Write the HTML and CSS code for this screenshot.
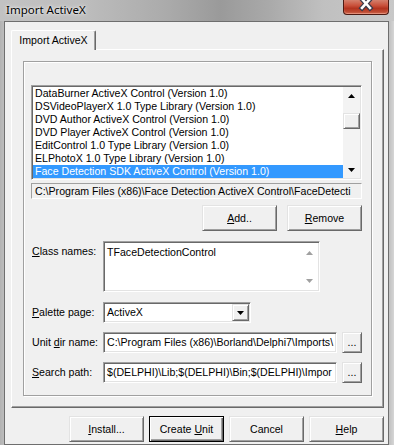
FILE: index.html
```html
<!DOCTYPE html>
<html>
<head>
<meta charset="utf-8">
<link rel="stylesheet" href="styles.css">
</head>
<body>
<div class="window">
  <div class="titlebar">
    <span class="title">Import ActiveX</span>
    <div class="close">
      <svg width="20" height="12" viewBox="0 0 20 12">
        <path d="M6 -1 L14 8 M14 -1 L6 8" stroke="#3a3a4a" stroke-width="5" stroke-linecap="square" fill="none"/>
        <path d="M6 -1 L14 8 M14 -1 L6 8" stroke="#ffffff" stroke-width="2.6" stroke-linecap="square" fill="none"/>
      </svg>
    </div>
  </div>
  <div class="client">
    <div class="tabs"><div class="tab">Import ActiveX</div></div>
    <div class="page">
      <div class="group">
        <div class="listbox sunken">
          <div class="items">
            <div class="item">DataBurner ActiveX Control (Version 1.0)</div>
            <div class="item">DSVideoPlayerX 1.0 Type Library (Version 1.0)</div>
            <div class="item">DVD Author ActiveX Control (Version 1.0)</div>
            <div class="item">DVD Player ActiveX Control (Version 1.0)</div>
            <div class="item">EditControl 1.0 Type Library (Version 1.0)</div>
            <div class="item">ELPhotoX 1.0 Type Library (Version 1.0)</div>
            <div class="item sel">Face Detection SDK ActiveX Control (Version 1.0)</div>
          </div>
          <div class="vscroll">
            <div class="sb-arrow"><svg width="7" height="4" viewBox="0 0 7 4"><polygon points="3.5,0 7,4 0,4" fill="#000"/></svg></div>
            <div class="sb-track"><div class="thumb"></div></div>
            <div class="sb-arrow"><svg width="7" height="4" viewBox="0 0 7 4"><polygon points="0,0 7,0 3.5,4" fill="#000"/></svg></div>
          </div>
        </div>
        <div class="pathfield">C:\Program Files (x86)\Face Detection ActiveX Control\FaceDetecti</div>
        <div class="btnrow">
          <button class="btn w75"><u>A</u>dd..</button>
          <button class="btn w75"><u>R</u>emove</button>
        </div>
        <div class="memo-row">
          <div class="label top"><u>C</u>lass names:</div>
          <div class="memo sunken">
            <div class="memo-text">TFaceDetectionControl</div>
            <div class="memo-scroll">
              <svg width="7" height="4" viewBox="0 0 7 4"><polygon points="3.5,0 7,4 0,4" fill="#a0a0a0"/></svg>
              <svg width="7" height="4" viewBox="0 0 7 4"><polygon points="0,0 7,0 3.5,4" fill="#a0a0a0"/></svg>
            </div>
          </div>
        </div>
        <div class="field-row first">
          <div class="label"><u>P</u>alette page:</div>
          <div class="combo sunken">
            <div class="combo-text">ActiveX</div>
            <div class="combo-btn"><svg width="7" height="4" viewBox="0 0 7 4"><polygon points="0,0 7,0 3.5,4" fill="#000"/></svg></div>
          </div>
        </div>
        <div class="field-row">
          <div class="label">Unit <u>d</u>ir name:</div>
          <div class="edit sunken">C:\Program Files (x86)\Borland\Delphi7\Imports\</div>
          <button class="btn dots">...</button>
        </div>
        <div class="field-row">
          <div class="label"><u>S</u>earch path:</div>
          <div class="edit sunken">$(DELPHI)\Lib;$(DELPHI)\Bin;$(DELPHI)\Impor</div>
          <button class="btn dots">...</button>
        </div>
      </div>
    </div>
    <div class="footer">
      <button class="btn w75 tall"><u>I</u>nstall...</button>
      <button class="btn w75 tall default">Create <u>U</u>nit</button>
      <button class="btn w75 tall">Cancel</button>
      <button class="btn w75 tall"><u>H</u>elp</button>
    </div>
  </div>
</div>
</body>
</html>
```

FILE: styles.css
```css
* { box-sizing: border-box; }
html, body { margin: 0; padding: 0; }
body {
  width: 394px;
  height: 445px;
  overflow: hidden;
  font-family: "Liberation Sans", Arial, sans-serif;
  font-size: 10.6px;
  color: #000;
  background: #b4b4b4;
}
u { text-decoration: underline; text-underline-offset: 1px; }

.window {
  width: 394px;
  height: 445px;
  display: flex;
  flex-direction: column;
  background: linear-gradient(90deg, #b2b2b2 0px, #bcbcbc 4px, #c4c4c4 390px, #d6d6d6 394px);
}

.titlebar {
  height: 21px;
  flex: none;
  display: flex;
  justify-content: space-between;
  align-items: flex-start;
  background: linear-gradient(90deg, #c2c2c2 0%, #bebebe 20%, #ababab 42%, #9a9a9a 56%, #a9a9a9 68%, #c0c0c0 82%, #c8c8c8 100%);
}
.title {
  font-family: "Noto Sans", "Open Sans", sans-serif;
  font-size: 11.5px;
  line-height: 20px;
  padding-left: 6px;
  color: #000;
  text-shadow: 0 0 4px rgba(255,255,255,0.9), 0 0 2px rgba(255,255,255,0.7);
}
.close {
  width: 46px;
  height: 15px;
  margin-right: 5px;
  border: 1px solid #4d1a12;
  border-top: none;
  border-radius: 0 0 4px 4px;
  background: linear-gradient(180deg, #d4806c 0%, #c9503a 40%, #b3341f 60%, #c65a40 100%);
  box-shadow: inset 0 -1px 1px rgba(255,190,170,0.6);
  display: flex;
  justify-content: center;
}

.client {
  margin-left: 4px;
  width: 385px;
  height: 424px;
  border: 1px solid #6e6e6e;
  background: #f0f0f0;
}

.tabs {
  display: flex;
  height: 28px;
  margin-bottom: -1px;
  padding: 8px 0 0 6px;
}
.tab {
  position: relative;
  z-index: 1;
  width: 85px;
  height: 20px;
  background: #f0f0f0;
  border-top: 1px solid #fff;
  border-left: 1px solid #fff;
  border-right: 1px solid #696969;
  border-radius: 2px 2px 0 0;
  box-shadow: inset -1px 0 0 #a0a0a0;
  text-align: center;
  line-height: 18px;
}

.page {
  margin-left: 6px;
  width: 373px;
  height: 359px;
  border-top: 1px solid #fff;
  border-left: 1px solid #fff;
  border-right: 1px solid #696969;
  border-bottom: 1px solid #696969;
  box-shadow: inset -1px -1px 0 #a0a0a0;
  padding: 11px 0 0 11px;
}

.group {
  width: 349px;
  height: 335px;
  border: 1px solid #a0a0a0;
  box-shadow: 1px 1px 0 #fff, inset 1px 1px 0 #fff;
  padding: 23px 9px 0 7px;
}

.sunken {
  border: 1px solid;
  border-color: #a0a0a0 #fff #fff #a0a0a0;
  box-shadow: inset 1px 1px 0 #696969, inset -1px -1px 0 #e3e3e3;
  background: #fff;
  padding: 1px;
}

.listbox {
  display: flex;
  width: 331px;
  height: 95px;
}
.items {
  flex: 1;
  overflow: hidden;
}
.item {
  height: 13px;
  line-height: 13px;
  padding-left: 2px;
  white-space: nowrap;
}
.item.sel {
  background: #3399ff;
  color: #fff;
}
.vscroll {
  width: 17px;
  display: flex;
  flex-direction: column;
  background: #f3f3f3;
}
.sb-arrow {
  height: 17px;
  display: flex;
  align-items: center;
  justify-content: center;
}
.sb-track {
  flex: 1;
  padding-top: 9px;
}
.thumb {
  height: 16px;
  background: #f0f0f0;
  border: 1px solid;
  border-color: #e3e3e3 #696969 #696969 #e3e3e3;
  box-shadow: inset 1px 1px 0 #fff, inset -1px -1px 0 #a0a0a0;
}

.pathfield {
  margin-top: 3px;
  width: 331px;
  height: 16px;
  border: 1px solid;
  border-color: #a0a0a0 #fff #fff #a0a0a0;
  background: #f0f0f0;
  padding-left: 3px;
  line-height: 14px;
  white-space: nowrap;
  overflow: hidden;
}

.btnrow {
  margin-top: 6px;
  width: 331px;
  display: flex;
  justify-content: flex-end;
  gap: 10px;
}

.btn {
  font: inherit;
  color: #000;
  background: #f0f0f0;
  border: 1px solid;
  border-color: #e3e3e3 #696969 #696969 #e3e3e3;
  box-shadow: inset 1px 1px 0 #fff, inset -1px -1px 0 #a0a0a0;
  padding: 0;
  margin: 0;
  height: 26px;
  text-align: center;
  white-space: nowrap;
}
.w75 { width: 75px; }
.btn.default {
  border: 1px solid #000;
  box-shadow: inset 1px 1px 0 #fff, inset -1px -1px 0 #696969, inset -2px -2px 0 #a0a0a0;
}
.btn.dots {
  width: 20px;
  height: 21px;
  line-height: 15px;
  flex: none;
}

.memo-row {
  margin-top: 10px;
  display: flex;
  width: 331px;
}
.label {
  width: 72px;
  flex: none;
  padding-left: 1px;
  line-height: 21px;
  white-space: nowrap;
}
.label.top {
  line-height: 13px;
  padding-top: 4px;
}
.memo {
  width: 217px;
  height: 51px;
  display: flex;
}
.memo-text {
  flex: 1;
  padding: 3px 0 0 2px;
  line-height: 13px;
  white-space: nowrap;
  overflow: hidden;
}
.memo-scroll {
  width: 17px;
  display: flex;
  flex-direction: column;
  justify-content: space-between;
  align-items: center;
  padding: 8px 0 7px;
}

.field-row {
  margin-top: 9px;
  display: flex;
  width: 331px;
  height: 21px;
  gap: 5px;
}
.field-row.first { margin-top: 10px; }
.field-row .label { margin-right: -5px; }

.combo {
  width: 148px;
  height: 21px;
  display: flex;
}
.combo-text {
  flex: 1;
  padding-left: 2px;
  line-height: 17px;
}
.combo-btn {
  width: 17px;
  height: 17px;
  background: #f0f0f0;
  border: 1px solid;
  border-color: #e3e3e3 #696969 #696969 #e3e3e3;
  box-shadow: inset 1px 1px 0 #fff, inset -1px -1px 0 #a0a0a0;
  display: flex;
  align-items: center;
  justify-content: center;
}

.edit {
  flex: 1;
  height: 21px;
  padding: 1px 2px 1px 3px;
  line-height: 17px;
  white-space: nowrap;
  overflow: hidden;
}

.footer {
  margin-top: 8px;
  display: flex;
  gap: 5px;
  padding-left: 64px;
}
```
